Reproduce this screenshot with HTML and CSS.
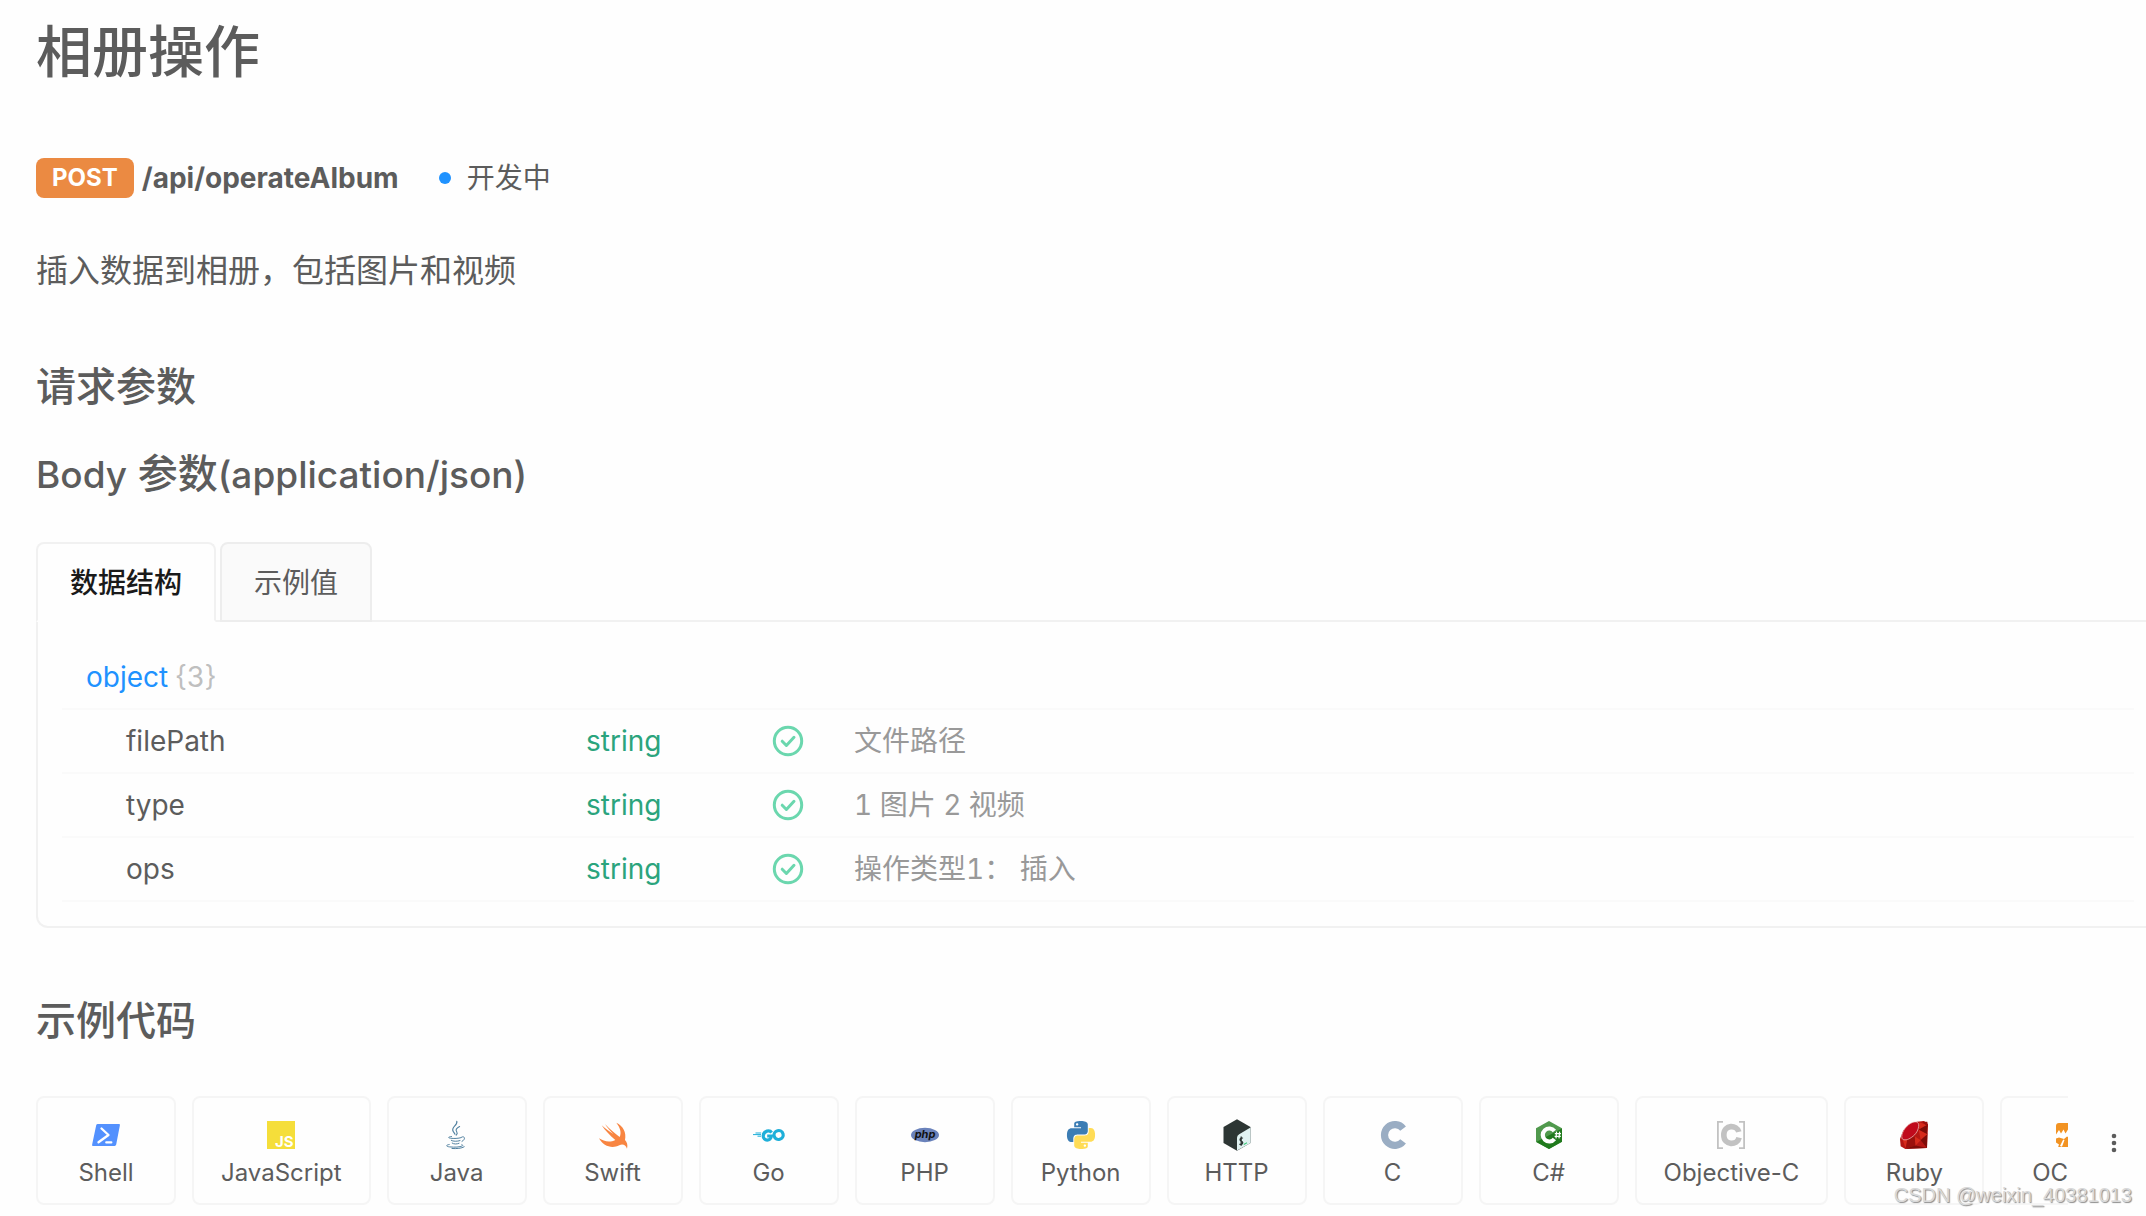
FILE: index.html
```html
<!DOCTYPE html>
<html lang="zh-CN">
<head>
<meta charset="utf-8">
<meta name="viewport" content="width=device-width, initial-scale=1">
<title>相册操作</title>
<link rel="stylesheet" href="styles.css">
</head>
<body>
<main class="page">
  <h1 class="title">相册操作</h1>

  <div class="endpoint">
    <span class="method">POST</span>
    <span class="path">/api/operateAlbum</span>
    <span class="status">开发中</span>
  </div>

  <p class="summary">插入数据到相册，包括图片和视频</p>

  <h2 class="heading">请求参数</h2>
  <h3 class="heading heading-sub"><span class="latin">Body</span> 参数<span class="latin">(application/json)</span></h3>

  <div class="tabs" role="tablist">
    <button class="tab tab-active" type="button" role="tab" aria-selected="true">数据结构</button>
    <button class="tab" type="button" role="tab" aria-selected="false">示例值</button>
  </div>

  <section class="panel" role="tabpanel">
    <table class="schema">
      <colgroup>
        <col class="col-name">
        <col class="col-type">
        <col class="col-required">
        <col>
      </colgroup>
      <tbody>
        <tr><td class="root" colspan="4"><span class="object">object</span> <span class="count">{3}</span></td></tr>
        <tr>
          <td class="name">filePath</td><td class="type">string</td>
          <td><svg class="check" viewBox="0 0 32 32" role="img" aria-label="必需"><circle cx="16" cy="16" r="13.7"/><path d="M10.2 16.2l4.2 4.3 7.6-8.2"/></svg></td>
          <td class="note">文件路径</td>
        </tr>
        <tr>
          <td class="name">type</td><td class="type">string</td>
          <td><svg class="check" viewBox="0 0 32 32" role="img" aria-label="必需"><circle cx="16" cy="16" r="13.7"/><path d="M10.2 16.2l4.2 4.3 7.6-8.2"/></svg></td>
          <td class="note">1 图片 2 视频</td>
        </tr>
        <tr>
          <td class="name">ops</td><td class="type">string</td>
          <td><svg class="check" viewBox="0 0 32 32" role="img" aria-label="必需"><circle cx="16" cy="16" r="13.7"/><path d="M10.2 16.2l4.2 4.3 7.6-8.2"/></svg></td>
          <td class="note">操作类型1： 插入</td>
        </tr>
      </tbody>
    </table>
  </section>

  <h2 class="heading heading-code">示例代码</h2>

  <div class="languages">
    <div class="cards">
      <button class="card" type="button">
        <svg class="icon" viewBox="0 0 28 28" aria-hidden="true"><path fill="#5391fe" d="M5.8 3H27q1.2 0 .9 1.200L24.200 23.600Q23.900 25 22.600 25H1Q-.2 25 .1 23.800L4.200 4.300Q4.500 3 5.800 3z"/><path fill="none" stroke="#fff" stroke-width="2.300" stroke-linecap="round" stroke-linejoin="round" d="M9.500 7.500l7 6.500-10 7.300M14.300 21.400h5"/></svg>
        <span>Shell</span>
      </button>
      <button class="card" type="button">
        <svg class="icon" viewBox="0 0 28 28" aria-hidden="true"><path fill="#f5de3a" d="M0 0h28v28H0z"/><text class="js-mark" x="26.500" y="25.500" text-anchor="end">JS</text></svg>
        <span>JavaScript</span>
      </button>
      <button class="card" type="button">
        <svg class="icon" viewBox="0 0 28 28" aria-hidden="true"><g fill="none" stroke="#5382a1" stroke-linecap="round"><path stroke-width="1.200" d="M13.800.4c1.200 3.800-6.100 5.800-3.700 9.800.6 1 1.500 1.900 1.900 3"/><path stroke-width="1.100" d="M16.600 5.600c-3.300 1.900-4.400 3-2.800 5.400.9 1.300.6 2-.6 3.100"/><path stroke-width="1" d="M8.500 15.500c-2.700.3-4.300 1.200-1.200 1.700 3.600.5 8 .3 11-.6M18.800 16c2.900-1.300 4.300 2.200.2 4.400M8.300 19.400c1.700 1.200 5.900 1.100 8.700.2M9.200 22.100c1.800 1.200 4.400 1.200 6.800.2M6.200 23.500c-3.400.5-3.600 2 .5 2.400 4.700.5 10.400.3 12.700-1.100.8-.5.300-.9-.5-1.200M9 27.500c4.400.3 9.700 0 12.200-1.700"/></g></svg>
        <span>Java</span>
      </button>
      <button class="card" type="button">
        <svg class="icon" viewBox="0 0 84 84" aria-hidden="true"><path fill="#f88541" d="M0 52C13 75 38 85 61 73 71 68 80 72 84 83 87 72 84 64 78 57 83 34 72 14 52 5 64 20 68 36 62 48 48 38 34 26 18 9 25 20 34 31 43 39 31 32 20 24 8 13 19 29 32 43 49 57 33 65 15 62 0 52z"/></svg>
        <span>Swift</span>
      </button>
      <button class="card" type="button">
        <svg class="icon icon-wide" viewBox="0 0 32 28" aria-hidden="true"><g fill="none" stroke="#1eafd9"><path stroke-width="1" d="M2.500 12h5.700M0 13.600h8M4.500 15.200H8"/><path stroke-width="3.200" d="M18.600 11.600C16.800 8.700 10.600 9.500 10.200 14.800c-.2 5.600 8 5.700 8.200.2h-4.200"/><ellipse cx="25.600" cy="14" rx="4.600" ry="4.400" stroke-width="3.200" transform="rotate(-15 25.600 14)"/></g></svg>
        <span>Go</span>
      </button>
      <button class="card" type="button">
        <svg class="icon" viewBox="0 0 28 28" aria-hidden="true"><ellipse cx="14" cy="14" rx="14" ry="7.200" fill="#6a82bb"/><text class="php-mark" x="14" y="16.600" text-anchor="middle">php</text></svg>
        <span>PHP</span>
      </button>
      <button class="card" type="button">
        <svg class="icon" viewBox="0 0 24 24" aria-hidden="true"><path fill="#3c7db4" d="M14.250.18l.9.2.73.26.59.3.45.32.34.34.25.34.16.33.1.3.04.26.02.2-.01.13V8.500l-.05.63-.13.55-.21.46-.26.38-.3.31-.33.25-.35.19-.35.14-.33.1-.3.07-.26.04-.21.02H8.770l-.69.05-.59.14-.5.22-.41.27-.33.32-.27.35-.2.36-.15.37-.1.35-.07.32-.04.27-.02.21v3.060H3.170l-.21-.03-.28-.07-.32-.12-.35-.18-.36-.26-.36-.36-.35-.46-.32-.59-.28-.73-.21-.88-.14-1.050-.05-1.230.06-1.220.16-1.040.24-.87.32-.71.36-.57.4-.44.42-.33.42-.24.4-.16.36-.1.32-.05.24-.01h.16l.06.01h8.160v-.83H6.180l-.01-2.750-.02-.37.05-.34.11-.31.17-.28.25-.26.31-.23.38-.2.44-.18.51-.15.58-.12.64-.1.71-.06.77-.04.84-.02 1.270.05zm-6.300 1.980l-.23.33-.08.41.08.41.23.34.33.22.41.09.41-.09.33-.22.23-.34.08-.41-.08-.41-.23-.33-.33-.22-.41-.09-.41.09z"/><path fill="#ffdc56" d="M21.040 6.110l.28.06.32.12.35.18.36.27.36.35.35.47.32.59.28.73.21.88.14 1.040.05 1.230-.06 1.230-.16 1.040-.24.86-.32.71-.36.57-.4.45-.42.33-.42.24-.4.16-.36.09-.32.05-.24.02-.16-.01h-8.220v.82h5.840l.01 2.760.02.36-.05.34-.11.31-.17.29-.25.25-.31.24-.38.2-.44.17-.51.15-.58.13-.64.09-.71.07-.77.04-.84.01-1.270-.04-1.070-.14-.9-.2-.73-.25-.59-.3-.45-.33-.34-.34-.25-.34-.16-.33-.1-.3-.04-.25-.02-.2.01-.13v-5.340l.05-.64.13-.54.21-.46.26-.38.3-.32.33-.24.35-.2.35-.14.33-.1.3-.06.26-.04.21-.02.13-.01h5.840l.69-.05.59-.14.5-.21.41-.28.33-.32.27-.35.2-.36.15-.36.1-.35.07-.32.04-.28.02-.21V6.070h2.090l.14.01zm-6.470 14.250l-.23.33-.08.41.08.41.23.33.33.23.41.08.41-.08.33-.23.23-.33.08-.41-.08-.41-.23-.33-.33-.23-.41-.08-.41.08z"/></svg>
        <span>Python</span>
      </button>
      <button class="card" type="button">
        <svg class="icon" viewBox="0 0 28 28" aria-hidden="true"><path fill="#2d3634" d="M14-1.800L27.500 6v16L14 29.800.5 22V6z"/><path fill="#e0f2f1" d="M16.200 13.200L27.500 6.400V22L14 29.600V16.800Q14 14.500 16.200 13.200z"/><path fill="none" stroke="#2d3634" stroke-width="1.300" d="M19.800 17.400c-1.200-1.400-3.300.2-2.600 1.900.6 1.300 2.400.8 2.500 2.300.1 1.700-2 2.600-3.200 1.200M18.200 15.400v9.400"/><path stroke="#3fc97a" stroke-width="1.100" d="M20.800 23.600l3.200-1.800"/></svg>
        <span>HTTP</span>
      </button>
      <button class="card" type="button">
        <svg class="icon" viewBox="0 0 28 28" aria-hidden="true"><path fill="none" stroke="#9aadc3" stroke-width="7.200" d="M24.100 7.600A10.400 10.400 0 1 0 24.100 20.400"/></svg>
        <span>C</span>
      </button>
      <button class="card" type="button">
        <svg class="icon" viewBox="0 0 28 28" aria-hidden="true"><path fill="#50994d" d="M14 0l13 7.300v13.400L14 28 1 20.700V7.300z"/><path fill="#207a1d" d="M1.200 21L27 7.500v13.200L14 28z"/><path fill="none" stroke="#fff" stroke-width="4.200" d="M19.400 10A6.500 6.500 0 1 0 19.400 18"/><path fill="none" stroke="#fff" stroke-width="1.200" d="M21.600 10.600l-.6 6.800M24.600 10.600l-.6 6.800M19.800 12.700h6.200M19.600 15.400h6.200"/></svg>
        <span>C#</span>
      </button>
      <button class="card" type="button">
        <svg class="icon" viewBox="0 0 28 28" aria-hidden="true"><path fill="none" stroke="#c2c2c2" stroke-width="1.800" d="M6 .9H.9v26.200H6M22 .9h5.100v26.200H22"/><path fill="none" stroke="#c2c2c2" stroke-width="5.600" d="M21.800 10.900C20.200 3.700 6.800 3 6.800 14s13.600 10.400 15.300 2.600"/></svg>
        <span>Objective-C</span>
      </button>
      <button class="card" type="button">
        <svg class="icon" viewBox="0 0 84 84" aria-hidden="true"><path fill="#b51713" d="M50 2L72 0 84 10 81 81 16 84 2 76 0 54 10 28z"/><path fill="#7e0c08" d="M62 58l20-22-1 45zM18 83l26-10 36 8zM56 26l27-16-2 30z"/><path fill="#d62a1b" d="M44 46l18 12-16 16zM8 56l16-2-8 26zM56 26l26 14-20 16zM58 4l22 8-22 12z"/><path fill="#9a100c" d="M22 54l22-8 2 28-28 8zM66 2l16 0 2 16z"/><path fill="#c00a1c" stroke="#f1d3d0" stroke-width="2" d="M6 52C2 38 16 16 32 7 46-1 58 2 56 16 54 32 44 44 30 52 20 58 8 58 6 52z"/></svg>
        <span>Ruby</span>
      </button>
      <button class="card" type="button">
        <svg class="icon" viewBox="0 0 28 28" aria-hidden="true"><path fill="#f29323" d="M3 2h22q3 0 3 3v18q0 3-3 3H3q-3 0-3-3V5q0-3 3-3z"/><path fill="#fff" d="M0 13.500L3 9l2 3.500L7.500 8.500l2 4L12 8.500l3 5 4-3 9 3v3H13l-2-1-3 2.500-5-1.500-3 1zM0 21.500l3 2-1 2.800-2 1zM7.200 18.500l1.300.5-2.500 6.800-2-.8z"/></svg>
        <span>OCaml</span>
      </button>
    </div>
    <button class="more" type="button" aria-label="更多">
      <svg class="dots" viewBox="0 0 6 20" aria-hidden="true"><circle cx="3" cy="3" r="2.300"/><circle cx="3" cy="10" r="2.300"/><circle cx="3" cy="17" r="2.300"/></svg>
    </button>
  </div>
  <div class="watermark">CSDN @weixin_40381013</div>
</main>
</body>
</html>
```
FILE: styles.css
```css
* {
  box-sizing: border-box;
}

body {
  margin: 0;
  background: #fefefe;
  color: #5c5c5c;
  font-family: Inter, "Noto Sans CJK SC", sans-serif;
  font-size: 28px;
  line-height: 40px;
}

button {
  margin: 0;
  color: inherit;
  font: inherit;
  cursor: pointer;
}

.page {
  position: relative;
  padding: 12px 0 10px 36px;
  overflow: hidden;
}

.title {
  margin: 0;
  font-size: 56px;
  font-weight: 500;
  line-height: 80px;
}

.endpoint {
  display: flex;
  align-items: center;
  margin-top: 66px;
}

.method {
  padding: 0 16px;
  border-radius: 8px;
  background: #eb8a42;
  color: #fff;
  font-size: 24px;
  font-weight: 700;
}

.path {
  margin-left: 8px;
  font-weight: 700;
}

.status {
  display: flex;
  align-items: center;
  gap: 16px;
  margin-left: 40px;
}

.status::before {
  width: 12px;
  height: 12px;
  border-radius: 50%;
  background: #1f92ff;
  content: "";
}

.summary {
  margin: 49px 0 0;
  font-size: 32px;
  line-height: 48px;
}

.heading {
  margin: 64px 0 0;
  font-size: 40px;
  font-weight: 500;
  line-height: 56px;
}

.heading-sub {
  margin-top: 31px;
}

.latin {
  font-size: 37px;
}

.tabs {
  display: flex;
  gap: 4px;
  margin-top: 39px;
}

.tab {
  height: 80px;
  padding: 2px 32px 0;
  border: 2px solid #ededed;
  border-radius: 8px 8px 0 0;
  background: #fafafa;
}

.tab-active {
  z-index: 1;
  border-color: #f1f1f1;
  border-bottom-color: #fefefe;
  background: #fefefe;
  color: #1a1a1a;
  font-weight: 500;
}

.panel {
  margin-top: -2px;
  padding: 24px 12px 24px 24px;
  border: 2px solid #f1f1f1;
  border-right: 0;
  border-radius: 0 0 0 12px;
}

.schema {
  width: 100%;
  border-spacing: 0;
  font-variant-numeric: tabular-nums;
  table-layout: fixed;
}

.schema td {
  height: 64px;
  padding: 0;
  border-bottom: 2px solid #fafafa;
  vertical-align: middle;
}

.col-name {
  width: 524px;
}

.col-type {
  width: 186px;
}

.col-required {
  width: 82px;
}

.schema .root {
  padding-left: 24px;
}

.schema .name {
  padding-left: 64px;
}

.object {
  color: #1f92ff;
}

.count {
  color: #bfbfbf;
}

.type {
  color: #2ba47d;
}

.note {
  color: #999;
}

.check {
  display: block;
  width: 32px;
  height: 32px;
  fill: none;
  stroke: #6bd7ae;
  stroke-width: 3;
  stroke-linecap: round;
  stroke-linejoin: round;
}

.heading-code {
  margin-top: 65px;
}

.languages {
  display: flex;
  align-items: flex-start;
  margin-top: 47px;
}

.cards {
  display: flex;
  flex: 1;
  gap: 16px;
  min-width: 0;
  overflow: hidden;
}

.card {
  display: flex;
  flex: none;
  flex-direction: column;
  align-items: center;
  gap: 8px;
  min-width: 140px;
  padding: 23px 27px 14px;
  border: 2px solid #f5f5f5;
  border-radius: 8px;
  background: #fefefe;
  font-size: 24px;
  line-height: 32px;
}

.icon {
  width: 28px;
  height: 28px;
  overflow: visible;
}

.icon-wide {
  width: 32px;
}

.js-mark {
  fill: #fff;
  font-size: 15px;
  font-weight: 700;
}

.php-mark {
  fill: #111;
  font-size: 11px;
  font-style: italic;
  font-weight: 700;
}

.more {
  display: flex;
  align-items: center;
  justify-content: center;
  width: 78px;
  height: 94px;
  padding: 0 0 0 14px;
  border: 0;
  background: none;
}

.dots {
  width: 6px;
  height: 20px;
  fill: #5c5c5c;
}

.watermark {
  position: absolute;
  right: 14px;
  bottom: 4px;
  color: #d9d9d9;
  font-family: "Liberation Sans", sans-serif;
  font-size: 20px;
  line-height: 32px;
  text-shadow: 1px 1px 1px #8c8c8c;
}
```
